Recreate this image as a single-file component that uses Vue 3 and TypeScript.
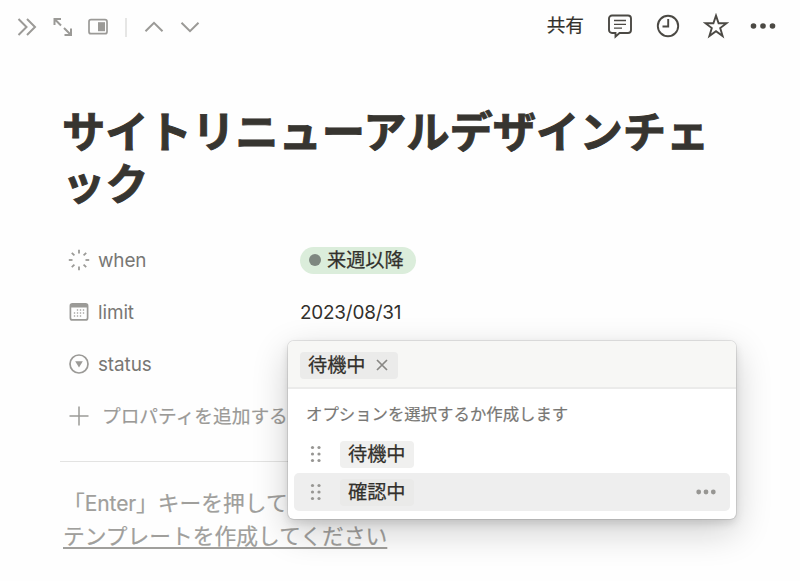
<script setup lang="ts">
import { ref } from 'vue'

interface Option {
  label: string
  active: boolean
}

const title = 'サイトリニューアルデザインチェック'
const options = ref<Option[]>([
  { label: '待機中', active: false },
  { label: '確認中', active: true },
])
const rays = [0, 45, 90, 135, 180, 225, 270, 315]
const dates = [
  [9, 7], [12, 7], [15, 7],
  [6, 10], [9, 10], [12, 10], [15, 10],
  [6, 13], [9, 13], [12, 13],
]
</script>

<template>
  <div class="page">
    <header class="toolbar">
      <div class="tools left">
        <svg class="i-close" width="20" height="20" viewBox="0 0 20 20"><path d="M1.500 2l8 8-8 8M10 2l8 8-8 8" /></svg>
        <svg class="i-expand" width="20" height="20" viewBox="0 0 20 20"><path d="M1.500 8V2H8M2 2.500L8 8.500M18 11.500v6.500h-6.500M17.500 17.500L11 11" /></svg>
        <svg class="i-peek" width="20" height="20" viewBox="0 0 20 20"><rect x="1" y="2.700" width="18" height="14" rx="2" /><rect class="solid" x="10" y="5.200" width="7" height="9" /></svg>
        <span class="divider"></span>
        <svg class="i-up" width="20" height="20" viewBox="0 0 20 20"><path d="M1.500 14.300L10 5.800l8.500 8.500" /></svg>
        <svg class="i-down" width="20" height="20" viewBox="0 0 20 20"><path d="M1.500 5.700l8.500 8.500 8.500-8.500" /></svg>
      </div>
      <div class="tools right">
        <span class="share">共有</span>
        <svg class="i-comment" width="26" height="26" viewBox="0 0 26 26"><path d="M5 2.500h16a3 3 0 0 1 3 3V17a3 3 0 0 1-3 3h-8.500L8.500 23.600V20H5a3 3 0 0 1-3-3V5.500a3 3 0 0 1 3-3z" /><path class="thin" d="M7 7.500h12M7 11.300h12M7 15.100h8" /></svg>
        <svg class="i-clock" width="26" height="26" viewBox="0 0 26 26"><circle cx="13" cy="13" r="10.200" /><path d="M13.200 6v7.500H7.500" /></svg>
        <svg class="i-star" width="26" height="26" viewBox="0 0 26 26"><path d="M13 2.600l2.600 7.600h8l-6.400 4.900 2.400 7.900L13 18.200 6.400 23l2.400-7.900-6.400-4.900h8z" /></svg>
        <svg class="i-more" width="26" height="26" viewBox="0 0 26 26"><circle cx="3.500" cy="13" r="2.800" /><circle cx="13" cy="13" r="2.800" /><circle cx="22.500" cy="13" r="2.800" /></svg>
      </div>
    </header>

    <main class="content">
      <h1>{{ title }}</h1>

      <div class="properties">
        <div class="row">
          <div class="name">
            <svg width="22" height="22" viewBox="0 0 22 22"><path v-for="r in rays" :key="r" class="ray" d="M11 .8v3.700" :transform="`rotate(${r} 11 11)`" /></svg>
            <span>when</span>
          </div>
          <span class="status-pill"><i class="dot"></i><span>来週以降</span></span>
        </div>
        <div class="row">
          <div class="name">
            <svg width="22" height="22" viewBox="0 0 22 22"><rect x="2.400" y="2.900" width="17.200" height="16" rx="2" /><path class="solid" d="M2 3h18v3.500H2z" /><circle v-for="([x, y], i) in dates" :key="i" class="solid" :cx="x + .5" :cy="y + 2" r=".8" /></svg>
            <span>limit</span>
          </div>
          <span class="date">2023/08/31</span>
        </div>
        <div class="row">
          <div class="name">
            <svg width="22" height="22" viewBox="0 0 22 22"><circle cx="11" cy="11" r="9" /><path class="solid" d="M7.200 8.200h7.600L11 14.500z" /></svg>
            <span>status</span>
          </div>
          <div class="anchor">
            <section class="menu">
              <div class="menu-head">
                <span class="tag selected">待機中<svg width="12" height="12" viewBox="0 0 12 12"><path d="M1 1l10 10M11 1L1 11" /></svg></span>
              </div>
              <p class="hint">オプションを選択するか作成します</p>
              <div v-for="o in options" :key="o.label" class="option" :class="{ active: o.active }">
                <svg class="grip" width="12" height="18" viewBox="0 0 12 18"><circle cx="2.500" cy="2.500" r="1.600" /><circle cx="9" cy="2.500" r="1.600" /><circle cx="2.500" cy="9" r="1.600" /><circle cx="9" cy="9" r="1.600" /><circle cx="2.500" cy="15.500" r="1.600" /><circle cx="9" cy="15.500" r="1.600" /></svg>
                <span class="tag">{{ o.label }}</span>
                <svg v-if="o.active" class="dots" width="20" height="6" viewBox="0 0 20 6"><circle cx="2.700" cy="3" r="2.400" /><circle cx="10" cy="3" r="2.400" /><circle cx="17.300" cy="3" r="2.400" /></svg>
              </div>
            </section>
          </div>
        </div>
        <div class="row add">
          <svg width="22" height="22" viewBox="0 0 22 22"><path d="M11 1.500v19M1.500 11h19" /></svg>
          <span>プロパティを追加する</span>
        </div>
      </div>

      <div class="body-hint">
        <p>「<span class="key">Enter</span>」キーを押して</p>
        <p><a>テンプレートを作成してください</a></p>
      </div>
    </main>
  </div>
</template>

<style>
body {
  background: #fefefe;
  overflow: hidden;
}
</style>

<style scoped>
.page {
  box-sizing: border-box;
  width: 800px;
  height: 581px;
  overflow: hidden;
  background: #fefefe;
  color: #32302c;
  font-family: Inter, "Noto Sans CJK JP", sans-serif;
  font-size: 19.200px;
}
svg {
  display: block;
  flex: none;
  fill: none;
  stroke: #9b9a97;
  stroke-width: 1.700;
}
.solid {
  fill: #9b9a97;
  stroke: none;
}
.toolbar {
  display: flex;
  justify-content: space-between;
  height: 54px;
  padding: 0 24px 0 17px;
  box-sizing: border-box;
}
.tools {
  display: flex;
  align-items: center;
}
.left {
  gap: 15.600px;
}
.left svg {
  stroke-width: 2;
}
.left .i-peek {
  stroke-width: 1.700;
}
.divider {
  width: 2px;
  height: 19px;
  margin: 0 2px 0 1px;
  background: #e6e6e5;
}
.right {
  gap: 22px;
  height: 52px;
}
.right svg {
  stroke: #4b4944;
  stroke-width: 1.900;
}
.right .i-comment,
.right .i-clock,
.right .i-star {
  transform: translateX(1px);
}
.right .thin {
  stroke-width: 1.300;
}
.right .i-more {
  fill: #4b4944;
  stroke: none;
}
.share {
  font-size: 18.700px;
  line-height: 26px;
  -webkit-text-stroke: .2px;
}
.content {
  padding: 52px 64px 0 62px;
}
h1 {
  width: 658px;
  margin: 0;
  color: #373530;
  font-size: 43.300px;
  line-height: 52px;
  font-weight: 700;
  -webkit-text-stroke: .9px #373530;
  word-break: break-all;
  line-break: anywhere;
}
.properties {
  padding-top: 24px;
}
.row {
  display: flex;
  align-items: center;
  height: 52px;
  margin-left: 6px;
}
.name {
  display: flex;
  align-items: center;
  gap: 8px;
  width: 232px;
  color: #787774;
  font-size: 18.900px;
  letter-spacing: -.1px;
  line-height: 26px;
}
.name span {
  padding-top: 1px;
}
.date {
  font-size: 18.900px;
  letter-spacing: -.2px;
}
.ray {
  stroke-width: 1.800;
}
.status-pill {
  display: flex;
  align-items: center;
  box-sizing: border-box;
  height: 27px;
  padding: 0 12px 0 9px;
  gap: 6px;
  border-radius: 14px;
  background: #dbeddb;
  line-height: 28px;
  -webkit-text-stroke: .25px;
}
.dot {
  width: 12px;
  height: 12px;
  border-radius: 50%;
  background: #7e8780;
}
.anchor {
  position: relative;
  align-self: stretch;
}
.menu {
  position: absolute;
  z-index: 2;
  top: 3px;
  left: -12px;
  box-sizing: border-box;
  width: 448px;
  height: 178px;
  border-radius: 6px;
  background: #fff;
  overflow: hidden;
  box-shadow: 0 0 0 1px rgba(15, 15, 15, .09), 0 4px 8px rgba(15, 15, 15, .13), 0 12px 36px rgba(15, 15, 15, .2);
}
.menu-head {
  display: flex;
  align-items: center;
  box-sizing: border-box;
  height: 48px;
  padding: 2px 12px 0;
  border-bottom: 2px solid #ebebea;
  background: #f7f7f5;
}
.tag {
  display: flex;
  align-items: center;
  height: 27px;
  padding: 0 8px;
  border-radius: 4px;
  background: #f0f0ef;
  line-height: 27px;
  -webkit-text-stroke: .25px;
}
.tag.selected {
  gap: 10px;
  padding-right: 10px;
  background: #ebebea;
}
.tag svg {
  stroke: #888784;
}
.hint {
  margin: 0;
  padding: 12px 0 8px 18px;
  color: #787774;
  font-size: 16.400px;
  line-height: 26px;
  -webkit-text-stroke: .2px;
}
.option {
  display: flex;
  align-items: center;
  height: 38px;
  margin: 0 6px;
  padding: 0 14px 0 16px;
  border-radius: 5px;
}
.option.active {
  background: #eee;
}
.active .tag {
  background: #eaeae9;
}
.grip {
  margin-right: 18px;
}
.grip,
.dots {
  fill: #979693;
  stroke: none;
}
.dots {
  margin-left: auto;
}
.add {
  gap: 12px;
  color: #9b9a97;
  font-size: 18.700px;
}
.add svg {
  stroke-width: 1.500;
}
.add span {
  padding-bottom: 4px;
  -webkit-text-stroke: .2px;
}
.body-hint {
  box-sizing: border-box;
  width: 675px;
  margin: 19px 0 0 -2px;
  padding: 25px 0 0 3px;
  border-top: 1px solid #e3e3e2;
  color: #a09f9c;
  font-size: 21.750px;
  line-height: 33px;
  -webkit-text-stroke: .2px;
}
.body-hint p {
  margin: 0;
}
.key {
  font-size: 21px;
  letter-spacing: -.1px;
}
.body-hint a {
  text-decoration: underline;
  text-decoration-thickness: 2px;
  text-underline-offset: 3px;
}
</style>
